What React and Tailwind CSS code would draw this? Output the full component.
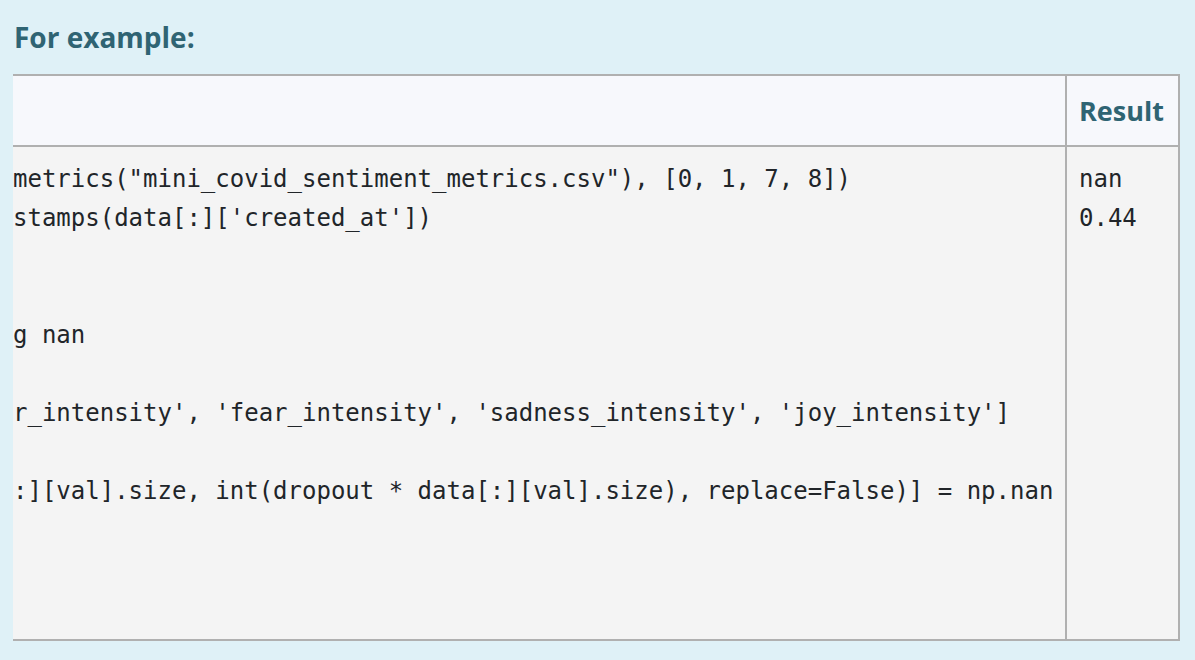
import React from "react";

const codeLines = [
  'metrics("mini_covid_sentiment_metrics.csv"), [0, 1, 7, 8])',
  "stamps(data[:]['created_at'])",
  "",
  "",
  "g nan",
  "",
  "r_intensity', 'fear_intensity', 'sadness_intensity', 'joy_intensity']",
  "",
  ":][val].size, int(dropout * data[:][val].size), replace=False)] = np.nan",
];

const results = ["nan", "0.44"];

export default function App() {
  return (
    <div className="h-[660px] w-[1195px] overflow-hidden bg-[#dff1f7] pl-[13px] pr-[15px]">
      <div className="pl-px pt-[18px] text-[28px] font-bold leading-[38px] text-[#2f6473] [font-family:'Open_Sans',sans-serif]">
        For example:
      </div>
      <div className="mt-[18px] border-y-2 border-r-2 border-[#b0b0b0]">
        <div className="flex h-[69px] bg-[#f7f8fc]">
          <div className="flex-1" />
          <div className="flex w-[113px] items-center border-l-2 border-[#b0b0b0] pl-[12px] pt-[2px] text-[27px] font-bold text-[#2f6473] [font-family:'Open_Sans',sans-serif]">
            Result
          </div>
        </div>
        <div className="flex h-[494px] border-t-2 border-[#b0b0b0] bg-[#f4f4f4] text-[24px] leading-[39px] text-[#212529]">
          <pre className="flex-1 overflow-hidden pt-[13px] [font-family:'DejaVu_Sans_Mono',monospace]">
            {codeLines.map((l, i) => (
              <div key={i} className="whitespace-pre">
                {l || " "}
              </div>
            ))}
          </pre>
          <pre className="w-[113px] border-l-2 border-[#b0b0b0] pl-[12px] pt-[13px] [font-family:'DejaVu_Sans_Mono',monospace]">
            {results.map((r, i) => (
              <div key={i}>{r}</div>
            ))}
          </pre>
        </div>
      </div>
    </div>
  );
}
